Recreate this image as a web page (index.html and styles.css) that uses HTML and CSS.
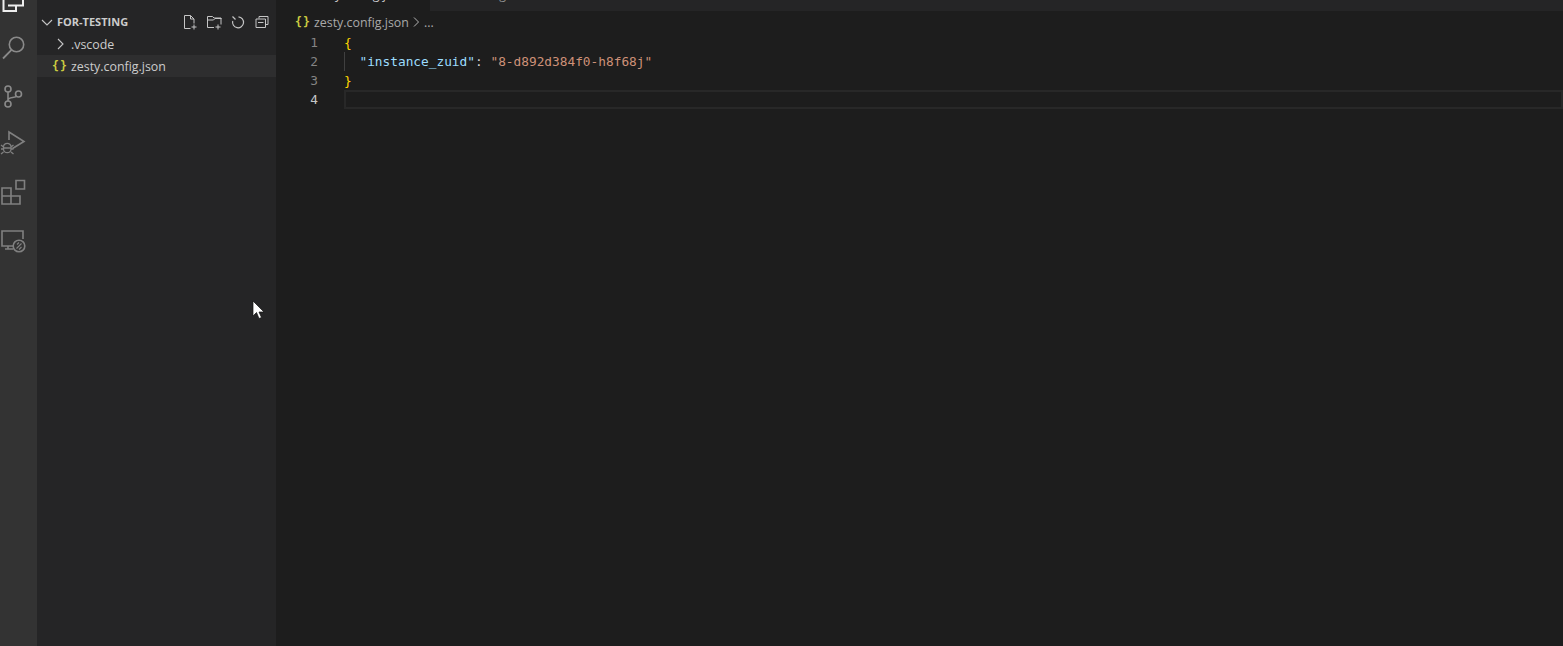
FILE: index.html
```html
<!DOCTYPE html>
<html lang="en">
<head>
<meta charset="utf-8">
<title>zesty.config.json</title>
<link rel="stylesheet" href="styles.css">
</head>
<body>
<div class="workbench">
  <nav class="activity">
    <svg class="act act-files" width="28" height="28" viewBox="0 0 28 28"><path d="M8.500 14V3M8 19.500H23V3M3.500 11v14H16V19.500" fill="none" stroke="#eeeeee" stroke-width="2"/></svg>
    <svg class="act" width="28" height="28" viewBox="0 0 28 28"><circle cx="16.500" cy="10.500" r="7.200" fill="none" stroke="#8a8a8a" stroke-width="1.600"/><path d="M11.500 15.800 3 24.500" fill="none" stroke="#8a8a8a" stroke-width="1.800"/></svg>
    <svg class="act" width="28" height="28" viewBox="0 0 28 28"><circle cx="8" cy="7" r="3" fill="none" stroke="#8a8a8a" stroke-width="1.600"/><circle cx="8" cy="22" r="3" fill="none" stroke="#8a8a8a" stroke-width="1.600"/><circle cx="18.500" cy="12" r="3" fill="none" stroke="#8a8a8a" stroke-width="1.600"/><path d="M8 10v9M8 18c0-3 7-2 9-4" fill="none" stroke="#8a8a8a" stroke-width="1.600"/></svg>
    <svg class="act" width="28" height="28" viewBox="0 0 28 28"><path d="M9 10V2l15 9.500-11.500 7" fill="none" stroke="#808080" stroke-width="1.600"/><path d="M3.500 16.500a3.800 3.800 0 0 1 7.500 0v3a3.800 3.800 0 0 1-7.500 0zM1 15l2.500 2M13.500 15 11 17M1 19h2.500M11 19h2.500M1 24l2.500-2M13.500 24 11 22M3.500 18h7.500" fill="none" stroke="#808080" stroke-width="1.300"/></svg>
    <svg class="act" width="28" height="28" viewBox="0 0 28 28"><path d="M2 10h9v16H2zM2 18h18v8h-9" fill="none" stroke="#808080" stroke-width="1.600"/><path d="M16 2.500h8.500V11H16z" fill="none" stroke="#808080" stroke-width="1.600"/></svg>
    <svg class="act" width="28" height="28" viewBox="0 0 28 28"><path d="M13 20H2V5h21v8M5 23h8M8 20v3" fill="none" stroke="#808080" stroke-width="1.600"/><circle cx="19" cy="20" r="5.800" fill="none" stroke="#808080" stroke-width="1.600"/><path d="M16.500 22.500l5-5M17 18.500l2-2M19 23.500l2.500-2.500" fill="none" stroke="#808080" stroke-width="1.100"/></svg>
  </nav>
  <aside class="sidebar">
    <header class="section-head">
      <svg class="chev" width="16" height="16" viewBox="0 0 16 16"><path d="M3 6l5 5 5-5" fill="none" stroke="#c5c5c5" stroke-width="1.100"/></svg>
      <span class="section-title">FOR-TESTING</span>
      <div class="head-actions">
        <svg width="16" height="16" viewBox="0 0 16 16"><path d="M8.500 14.500H2.500v-13h6l3.500 3.500v4.500M8.500 1.500V5H12M12 10.500v5M9.500 13h5" fill="none" stroke="#c5c5c5" stroke-width="1"/></svg>
        <svg width="16" height="16" viewBox="0 0 16 16"><path d="M8 13.500H1.500v-11h5l1.500 1.500h7v6.500M1.500 6h6l1.500-1.500h6.500M12 10.500v5M9.500 13h5" fill="none" stroke="#c5c5c5" stroke-width="1"/></svg>
        <svg width="16" height="16" viewBox="0 0 16 16"><path d="M2.500 2.500 5.500 5.500M8.500 2.800a5.500 5.500 0 1 1-5.800 4.200" fill="none" stroke="#c5c5c5" stroke-width="1.200"/></svg>
        <svg width="16" height="16" viewBox="0 0 16 16"><path d="M5 4.500V2.500h9v8h-2.500M2 5h9.500v8.500H2zM4 8.500h5.500" fill="none" stroke="#c5c5c5" stroke-width="1"/></svg>
      </div>
    </header>
    <div class="row">
      <svg class="row-chev" width="16" height="16" viewBox="0 0 16 16"><path d="M6 3l5 5-5 5" fill="none" stroke="#c5c5c5" stroke-width="1.100"/></svg>
      <span class="name">.vscode</span>
    </div>
    <div class="row row-active">
      <span class="json-icon"><span class="br-y">{</span><span class="br-g">}</span></span>
      <span class="name">zesty.config.json</span>
    </div>
  </aside>
  <main class="editor">
    <div class="tabs">
      <div class="tab tab-active"><span class="tab-label">zesty.config.json</span></div>
      <div class="tab"><span class="tab-label tab-label-dim">Settings</span></div>
    </div>
    <div class="crumbs">
      <span class="json-icon json-icon-crumb"><span class="br-y">{</span><span class="br-g">}</span></span>
      <span class="crumb">zesty.config.json</span>
      <svg class="crumb-sep" width="16" height="16" viewBox="0 0 16 16"><path d="M6 3.500l4.500 4.500L6 12.500" fill="none" stroke="#b5b5b5" stroke-width="1"/></svg>
      <span class="crumb">...</span>
    </div>
    <div class="code">
      <div class="line"><span class="ln">1</span><span class="src"><span class="brace">{</span></span></div>
      <div class="line"><span class="ln">2</span><span class="src src-guide"><span class="pun">  </span><span class="key">"instance_zuid"</span><span class="pun">: </span><span class="str">"8-d892d384f0-h8f68j"</span></span></div>
      <div class="line"><span class="ln">3</span><span class="src"><span class="brace">}</span></span></div>
      <div class="line line-current"><span class="ln ln-current">4</span><span class="src"></span></div>
    </div>
  </main>
</div>
<svg class="cursor" width="14" height="20" viewBox="0 0 14 20"><path d="M1 1v15l3.500-3.500 2.500 6 2.500-1-2.500-5.500H12z" fill="#ffffff" stroke="#111111" stroke-width="0.700"/></svg>
</body>
</html>
```
FILE: styles.css
```css
* { box-sizing: border-box; }
html, body { margin: 0; height: 100%; overflow: hidden; background: #1d1d1d; }
.workbench { display: flex; width: 1563px; height: 646px; font-family: "Open Sans", "Noto Sans", sans-serif; color: #cccccc; }

.activity { width: 37px; flex: none; background: #333333; display: flex; flex-direction: column; align-items: flex-start; overflow: hidden; }
.act { flex: none; display: block; margin-bottom: 20px; }
.act-files { margin-top: -14px; }

.sidebar { width: 239px; flex: none; background: #252526; display: flex; flex-direction: column; padding-top: 10px; }
.section-head { height: 23px; display: flex; align-items: center; padding-left: 2px; }
.chev { flex: none; }
.section-title { font-size: 11px; font-weight: 700; color: #cccccc; margin-left: 2px; }
.head-actions { margin-left: auto; display: flex; gap: 8px; padding-right: 6px; }
.row { height: 22px; display: flex; align-items: center; font-size: 12.4px; }
.row-chev { margin-left: 15px; flex: none; }
.row .name { margin-left: 3px; }
.row-active { background: #2e2e2f; padding-left: 15px; }
.row-active .name { margin-left: 4px; }
.json-icon { width: 15px; display: flex; justify-content: center; gap: 1px; font-family: "DejaVu Sans Mono", monospace; font-size: 11.5px; font-weight: 700; }
.br-y { color: #cbcb41; }
.br-g { color: #cbcb41; }

.editor { flex: 1; min-width: 0; display: flex; flex-direction: column; background: #1d1d1d; }
.tabs { height: 11px; background: #252526; flex: none; display: flex; overflow: hidden; }
.tab { width: 154px; height: 11px; overflow: hidden; padding-left: 36px; font-size: 12.4px; line-height: 17px; }
.tab-active { background: #1d1d1d; }
.tab-label { display: block; margin-top: -14px; white-space: nowrap; }
.tab-label-dim { color: #8f8f8f; }
.crumbs { height: 22px; display: flex; align-items: center; padding-left: 19px; font-size: 12.4px; color: #a9a9a9; flex: none; }
.json-icon-crumb { margin-right: 4px; }
.crumb-sep { margin-left: -1px; flex: none; }
.code { font-family: "DejaVu Sans Mono", "Liberation Mono", monospace; font-size: 12.8px; line-height: 19px; }
.line { height: 19px; display: flex; white-space: pre; }
.ln { width: 42px; flex: none; text-align: right; color: #858585; }
.ln-current { color: #c6c6c6; }
.src { margin-left: 26px; flex: 1; }
.src-guide { box-shadow: inset 1px 0 0 #404040; }
.line-current .src { box-shadow: inset 0 0 0 2px #282828; }
.brace { color: #ffd700; }
.key { color: #9cdcfe; }
.pun { color: #d4d4d4; }
.str { color: #ce9178; }

.cursor { position: absolute; left: 252px; top: 300px; }
```
